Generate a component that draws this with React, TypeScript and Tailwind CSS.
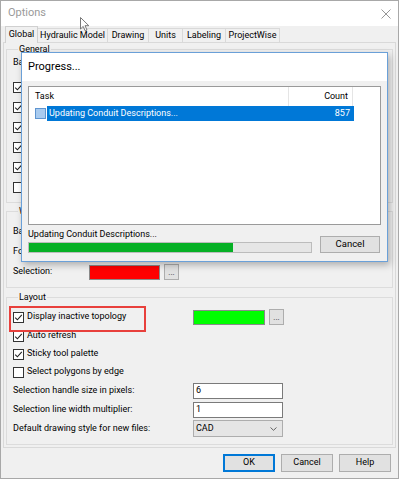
import React from "react";

const font = "font-[family-name:Roboto,'Liberation_Sans',sans-serif]";

function Check({ checked }: { checked?: boolean }) {
  return (
    <span className="w-[11px] h-[11px] shrink-0 border border-[#333] bg-white flex items-center justify-center">
      {checked && (
        <svg width="9" height="9" viewBox="0 0 9 9">
          <path d="M1.2 4.6 L3.4 6.8 L7.8 1.8" fill="none" stroke="#222" strokeWidth="1.1" />
        </svg>
      )}
    </span>
  );
}

function CheckRow({ label, checked, h = "h-[18px]" }: { label?: string; checked?: boolean; h?: string }) {
  return (
    <div className={`${h} flex items-center gap-[3px]`}>
      <Check checked={checked} />
      {label && <span>{label}</span>}
    </div>
  );
}

function DotsButton() {
  return (
    <span className="w-[15px] h-[16px] border border-[#adadad] bg-[#e1e1e1] flex items-end justify-center pb-[2px] text-[8px] leading-none text-[#333]">
      ...
    </span>
  );
}

function Swatch({ color }: { color: string }) {
  return <span className={`h-[15px] border border-[#8a8a8a] ${color}`} />;
}

function Group({ title, className, children }: { title: string; className?: string; children: React.ReactNode }) {
  return (
    <fieldset className={`border border-[#dcdcdc] px-[6px] ${className ?? ""}`}>
      <legend className="ml-[5px] px-[1px] h-[12px] leading-[12px]">{title}</legend>
      {children}
    </fieldset>
  );
}

function Tab({ label, w, active }: { label: string; w: string; active?: boolean }) {
  return active ? (
    <div className={`${w} relative z-10 -mb-px h-[17px] border border-b-0 border-[#d0d0d0] bg-[#f0f0f0] flex items-center justify-center`}>
      {label}
    </div>
  ) : (
    <div className={`${w} h-[14px] border border-l-0 border-b-0 border-[#d9d9d9] bg-[#f0f0f0] flex items-center justify-center`}>
      {label}
    </div>
  );
}

function DlgButton({ label, primary }: { label: string; primary?: boolean }) {
  return (
    <div
      className={`w-[52px] h-[18px] flex items-center justify-center bg-[#e1e1e1] ${
        primary ? "border-2 border-[#0078d7]" : "border border-[#adadad]"
      }`}
    >
      {label}
    </div>
  );
}

function ProgressDialog() {
  return (
    <div className="absolute left-[20px] top-[51px] w-[367px] h-[210px] border border-[#6aa0d8] bg-[#f0f0f0] shadow-[2px_3px_7px_rgba(0,0,0,0.28)] flex flex-col">
      <div className="h-[28px] bg-white flex items-center pl-[6px] text-[11px]">Progress...</div>
      <div className="flex-1 px-[6px] pt-[5px] flex flex-col">
        <div className="h-[139px] border border-[#9a9a9a] bg-white flex flex-col">
          <div className="h-[19px] flex">
            <div className="w-[260px] border-r border-[#e5e5e5] flex items-center pl-[6px]">Task</div>
            <div className="w-[64px] border-r border-[#e5e5e5] flex items-center justify-end pr-[4px]">Count</div>
          </div>
          <div className="h-[15px] flex items-center">
            <span className="ml-[6px] w-[11px] h-[11px] border border-[#5f95d0] bg-[#a9cbef]" />
            <div className="ml-[1px] w-[307px] h-[15px] bg-[#0078d7] text-white flex items-center justify-between pl-[2px] pr-[4px]">
              <span>Updating Conduit Descriptions...</span>
              <span>857</span>
            </div>
          </div>
        </div>
        <div className="flex items-end mt-[3px]">
          <div className="w-[284px] flex flex-col">
            <div className="h-[14px] flex items-center">Updating Conduit Descriptions...</div>
            <div className="h-[11px] border border-[#bcbcbc] bg-[#e6e6e6] flex">
              <div className="w-[204px] bg-[#06b025]" />
            </div>
          </div>
          <div className="ml-[8px] w-[60px] h-[17px] border border-[#adadad] bg-[#e1e1e1] flex items-center justify-center text-[9.5px]">
            Cancel
          </div>
        </div>
      </div>
    </div>
  );
}

export default function App() {
  return (
    <div className={`relative w-[399px] h-[479px] overflow-hidden border border-[#a8a8a8] bg-[#f0f0f0] text-[9px] text-black ${font}`}>
      {/* title bar */}
      <div className="h-[25px] bg-white flex items-center justify-between pl-[7px] pr-[7px]">
        <span className="text-[11px] text-[#9a9a9a]">Options</span>
        <svg width="10" height="10" viewBox="0 0 10 10">
          <path d="M0.5 0.5 L9.5 9.5 M9.5 0.5 L0.5 9.5" stroke="#8a8a8a" strokeWidth="0.9" />
        </svg>
      </div>

      {/* tabs */}
      <div className="h-[16px] flex items-end pl-[4px]">
        <Tab label="Global" w="w-[33px]" active />
        <Tab label="Hydraulic Model" w="w-[70px]" />
        <Tab label="Drawing" w="w-[41px]" />
        <Tab label="Units" w="w-[34px]" />
        <Tab label="Labeling" w="w-[43px]" />
        <Tab label="ProjectWise" w="w-[54px]" />
      </div>

      {/* tab page; the parts under the progress dialog only show their left edge */}
      <div className="mx-[2px] h-[406px] border border-[#d9d9d9] px-[2px] flex flex-col">
        <Group title="General" className="h-[160px]">
          <div className="h-[16px] flex items-center">Ba</div>
          <div className="mt-[6px]">
            <CheckRow h="h-[20px]" checked />
            <CheckRow h="h-[20px]" checked />
            <CheckRow h="h-[20px]" checked />
            <CheckRow h="h-[20px]" checked />
            <CheckRow h="h-[20px]" checked />
            <CheckRow h="h-[20px]" />
          </div>
        </Group>

        <Group title="Wi" className="mt-[2px] h-[83px]">
          <div className="mt-[5px] h-[20px] flex items-center">
            <span className="w-[76px]">Ba</span>
            <Swatch color="w-[71px] bg-white" />
          </div>
          <div className="h-[20px] flex items-center">
            <span className="w-[76px]">Fo</span>
            <Swatch color="w-[71px] bg-black" />
          </div>
          <div className="h-[20px] flex items-center">
            <span className="w-[76px]">Selection:</span>
            <Swatch color="w-[71px] bg-[#ff0000]" />
            <span className="ml-[4px]">
              <DotsButton />
            </span>
          </div>
        </Group>

        <Group title="Layout" className="mt-[3px] h-[154px]">
          <div className="mt-[4px] h-[20px] flex items-center">
            <div className="w-[180px] flex items-center gap-[3px]">
              <Check checked />
              <span>Display inactive topology</span>
            </div>
            <Swatch color="w-[72px] bg-[#00ff00]" />
            <span className="ml-[4px]">
              <DotsButton />
            </span>
          </div>
          <CheckRow checked label="Auto refresh" />
          <CheckRow checked label="Sticky tool palette" />
          <CheckRow label="Select polygons by edge" />
          <div className="h-[19px] flex items-center">
            <span className="w-[180px]">Selection handle size in pixels:</span>
            <span className="w-[90px] h-[16px] border border-[#7a7a7a] bg-white flex items-center pl-[2px]">6</span>
          </div>
          <div className="h-[19px] flex items-center">
            <span className="w-[180px]">Selection line width multiplier:</span>
            <span className="w-[90px] h-[16px] border border-[#7a7a7a] bg-white flex items-center pl-[2px]">1</span>
          </div>
          <div className="h-[19px] flex items-center">
            <span className="w-[180px]">Default drawing style for new files:</span>
            <span className="w-[90px] h-[17px] border border-[#adadad] bg-[#e5e5e5] flex items-center justify-between pl-[2px] pr-[5px]">
              <span>CAD</span>
              <svg width="7" height="4" viewBox="0 0 7 4">
                <path d="M0.5 0.5 L3.5 3.3 L6.5 0.5" fill="none" stroke="#555" strokeWidth="0.9" />
              </svg>
            </span>
          </div>
        </Group>
      </div>

      {/* dialog buttons */}
      <div className="mt-[6px] flex justify-end gap-[6px] pr-[7px]">
        <DlgButton label="OK" primary />
        <DlgButton label="Cancel" />
        <DlgButton label="Help" />
      </div>

      <ProgressDialog />

      {/* annotation highlight */}
      <div className="absolute left-[8px] top-[305px] w-[137px] h-[26px] border-2 border-[#e8403c]" />

      {/* mouse cursor */}
      <svg className="absolute left-[79px] top-[16px]" width="10" height="15" viewBox="0 0 10 15">
        <path d="M0.5 0.5 L0.5 12 L3.2 9.4 L5.2 13.8 L7 13 L5 8.7 L8.8 8.7 Z" fill="#fff" stroke="#6a6a6a" strokeWidth="0.9" />
      </svg>
    </div>
  );
}
